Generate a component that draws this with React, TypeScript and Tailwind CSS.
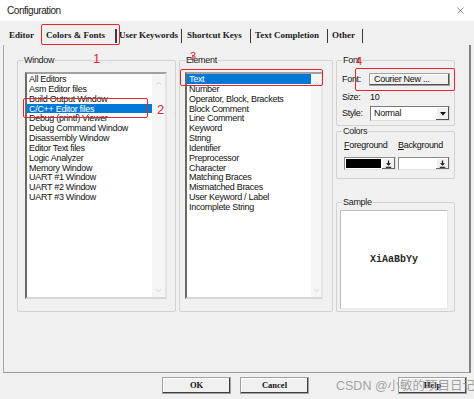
import React from "react";
import { X, ChevronUp, ChevronDown } from "lucide-react";

const windows = [
  "All Editors",
  "Asm Editor files",
  "Build Output Window",
  "C/C++ Editor files",
  "Debug (printf) Viewer",
  "Debug Command Window",
  "Disassembly Window",
  "Editor Text files",
  "Logic Analyzer",
  "Memory Window",
  "UART #1 Window",
  "UART #2 Window",
  "UART #3 Window",
];

const elements = [
  "Text",
  "Number",
  "Operator, Block, Brackets",
  "Block Comment",
  "Line Comment",
  "Keyword",
  "String",
  "Identifier",
  "Preprocessor",
  "Character",
  "Matching Braces",
  "Mismatched Braces",
  "User Keyword / Label",
  "Incomplete String",
];

function Sep({ thick }: { thick?: boolean }) {
  return <div className={thick ? "w-[2px] h-[14px] bg-[#3a3a3a]" : "w-px h-[14px] bg-[#3a3a3a]"} />;
}

function GroupBox({ label, className, children }: { label: string; className: string; children?: React.ReactNode }) {
  return (
    <div className={"relative border border-[#d2d2d2] rounded-[2px] " + className}>
      <span className="absolute -top-[6px] left-[5px] px-px bg-[#f0f0f0] text-[9px] leading-[10px] tracking-[-0.3px] text-[#222]">
        {label}
      </span>
      {children}
    </div>
  );
}

function ListBox({ items, selected, className, barWidth }: { items: string[]; selected: number; className: string; barWidth: string }) {
  return (
    <div
      className={
        "flex bg-white border-2 border-t-[#a0a0a0] border-l-[#6a6a6a] border-r-[#e4e4e4] border-b-[#d6d6d6] " + className
      }
    >
      <div className="flex-1 min-w-0">
        {items.map((item, i) => (
          <div
            key={item}
            className={
              i === selected
                ? "h-[9.85px] leading-[10px] pl-[2px] text-[9px] tracking-[-0.3px] whitespace-nowrap bg-[#0078d7] text-white"
                : "h-[9.85px] leading-[10px] pl-[2px] text-[9px] tracking-[-0.3px] whitespace-nowrap text-[#111]"
            }
          >
            {item}
          </div>
        ))}
      </div>
      <div className={"flex flex-col items-center justify-between pt-[5px] pb-[2px] bg-[#f5f5f5] text-[#b5b5b5] " + barWidth}>
        <ChevronUp size={9} strokeWidth={1.5} />
        <ChevronDown size={9} strokeWidth={1.5} />
      </div>
    </div>
  );
}

function DownGlyph() {
  return (
    <svg width="7" height="8" viewBox="0 0 7 8">
      <path d="M3.5 0.5v3" stroke="#111" strokeWidth="1.2" />
      <path d="M1 3.2h5L3.5 5.8z" fill="#111" />
      <path d="M0.8 7.3h5.4" stroke="#111" strokeWidth="1.1" />
    </svg>
  );
}

function Picker({ color }: { color: string }) {
  return (
    <div className="flex w-[52px] h-[13px] bg-white border border-t-[#8a8a8a] border-l-[#8a8a8a] border-r-[#e2e2e2] border-b-[#e2e2e2]">
      <div className={"flex-1 m-px " + color} />
      <div className="w-[13px] flex items-center justify-center bg-[#f0f0f0] shadow-[inset_-1px_-1px_#6a6a6a,inset_1px_1px_#fff]">
        <DownGlyph />
      </div>
    </div>
  );
}

function Button({ label, className }: { label: string; className: string }) {
  return (
    <div
      className={
        "h-[17px] flex items-center justify-center bg-[#f0f0f0] border border-[#a0a0a0] shadow-[inset_-1px_-1px_#404040,inset_1px_1px_#fff] font-['Liberation_Serif',serif] font-bold text-[8.5px] text-[#111] " +
        className
      }
    >
      {label}
    </div>
  );
}

function RedBox({ className }: { className: string }) {
  return <div className={"absolute border-[1.5px] border-[#e2262b] rounded-[2px] " + className} />;
}

export default function App() {
  return (
    <div className="relative w-[474px] h-[399px] overflow-hidden bg-[#f0f0f0] font-['Liberation_Sans',Arial,sans-serif] text-[#111] flex flex-col">
      {/* title bar */}
      <div className="h-[21px] bg-white flex items-center justify-between pl-[7px] pr-[8px]">
        <span className="text-[10px] tracking-[-0.45px] text-[#222]">Configuration</span>
        <X size={11} strokeWidth={1.2} className="text-[#333]" />
      </div>

      {/* tabs */}
      <div className="h-[24px] pt-[8px] pl-[9px] flex items-start font-['Liberation_Serif',serif] font-bold text-[9px] leading-[13px] text-[#1a1a1a]">
        <span className="w-[32px]">Editor</span>
        <span className="w-[74px] pl-[5px]">Colors &amp; Fonts</span>
        <Sep thick />
        <span className="w-[64px] pl-[2px]">User Keywords</span>
        <Sep />
        <span className="w-[68px] pl-[5px]">Shortcut Keys</span>
        <Sep />
        <span className="w-[76px] pl-[4px]">Text Completion</span>
        <Sep />
        <span className="w-[34px] pl-[4px]">Other</span>
        <Sep />
      </div>

      {/* tab page */}
      <div className="mx-[3px] h-[328px] border-l border-l-[#a8a8a8] border-r-2 border-r-[#808080] border-b border-b-[#9a9a9a] pl-[13px] flex items-start">
        <GroupBox label="Window" className="mt-[15px] w-[159px] h-[252px] pt-[11px] pl-[7px]">
          <ListBox items={windows} selected={3} className="w-[142px] h-[227px]" barWidth="w-[13px]" />
        </GroupBox>

        <GroupBox label="Element" className="mt-[15px] ml-[3px] w-[154px] h-[252px] pt-[11px] pl-[5px]">
          <ListBox items={elements} selected={0} className="w-[138px] h-[227px]" barWidth="w-[10px]" />
        </GroupBox>

        <div className="ml-[3px] w-[119px] flex flex-col">
          <GroupBox label="Font" className="mt-[15px] h-[66px] pt-[12px] pl-[5px] text-[9px] tracking-[-0.3px]">
            <div className="flex items-center h-[13px]">
              <span className="w-[27px]">Font:</span>
              <div className="w-[81px] h-[13px] flex items-center pl-[4px] bg-[#f0f0f0] border border-[#a0a0a0] shadow-[inset_-1px_-1px_#505050,inset_1px_1px_#fff]">
                Courier New ...
              </div>
            </div>
            <div className="flex items-center h-[10px] mt-[7px]">
              <span className="w-[28px]">Size:</span>
              <span>10</span>
            </div>
            <div className="flex items-center h-[15px] mt-[3px]">
              <span className="w-[28px]">Style:</span>
              <div className="w-[80px] h-[15px] flex items-center bg-white border border-t-[#7a7a7a] border-l-[#7a7a7a] border-r-[#dcdcdc] border-b-[#dcdcdc]">
                <span className="flex-1 pl-[3px]">Normal</span>
                <div className="w-[13px] h-[13px] flex items-center justify-center bg-[#f0f0f0] shadow-[inset_-1px_-1px_#505050,inset_1px_1px_#fff]">
                  <svg width="6" height="4" viewBox="0 0 6 4">
                    <path d="M0 0h6L3 3.5z" fill="#111" />
                  </svg>
                </div>
              </div>
            </div>
          </GroupBox>

          <GroupBox label="Colors" className="mt-[5px] h-[48px] pt-[9px] text-[9px] tracking-[-0.3px]">
            <div className="flex h-[10px] items-center pl-[7px]">
              <span className="w-[54px]">
                <span className="underline">F</span>oreground
              </span>
              <span>
                <span className="underline">B</span>ackground
              </span>
            </div>
            <div className="flex mt-[6px] pl-[7px] gap-[2px]">
              <Picker color="bg-black" />
              <Picker color="bg-white" />
            </div>
          </GroupBox>

          <GroupBox label="Sample" className="mt-[23px] h-[110px] pt-[7px] pl-[3px]">
            <div className="w-[108px] h-[99px] bg-white border border-t-[#bdbdbd] border-l-[#bdbdbd] border-r-[#e8e8e8] border-b-[#e8e8e8] flex items-center justify-center font-['Liberation_Mono',monospace] font-bold text-[10px] text-[#2a2a2a]">
              XiAaBbYy
            </div>
          </GroupBox>
        </div>
      </div>

      {/* buttons */}
      <div className="flex pt-[4px] pl-[162px]">
        <Button label="OK" className="w-[69px]" />
        <Button label="Cancel" className="w-[69px] ml-[9px]" />
        <Button label="Help" className="w-[69px] ml-[89px]" />
      </div>

      {/* annotations */}
      <RedBox className="left-[41px] top-[24px] w-[79px] h-[21px]" />
      <RedBox className="left-[23px] top-[98px] w-[125px] h-[20px]" />
      <RedBox className="left-[180px] top-[69px] w-[143px] h-[17px]" />
      <RedBox className="left-[355px] top-[68px] w-[100px] h-[23px]" />
      <span className="absolute left-[93px] top-[52px] text-[13px] leading-[14px] text-[#e2262b]">1</span>
      <span className="absolute left-[157px] top-[103px] text-[13px] leading-[14px] text-[#e2262b]">2</span>
      <span className="absolute left-[190px] top-[50px] text-[11px] leading-[12px] text-[#e2262b]">3</span>
      <span className="absolute left-[356px] top-[55px] text-[11px] leading-[12px] text-[#e2262b]">4</span>

      <span className="absolute left-[336px] top-[379px] text-[12.5px] leading-[15px] text-[#8c8c8c]/80 font-['Liberation_Sans','Noto_Sans_CJK_SC',sans-serif] whitespace-nowrap">
        CSDN @小敏的项目日记
      </span>
    </div>
  );
}
